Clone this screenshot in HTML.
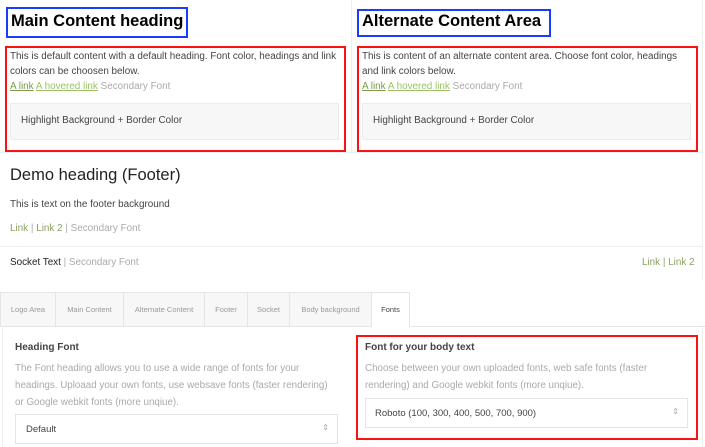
<!DOCTYPE html>
<html><head><style>
*{margin:0;padding:0;box-sizing:border-box}
body{width:705px;height:447px;background:#fff;font-family:"Liberation Sans",sans-serif;position:relative;overflow:hidden;color:#333}
.a{position:absolute;white-space:nowrap}
.blue{position:absolute;border:2px solid #1a3cff}
.red{position:absolute;border:2px solid #ff1010}
.h1{font-weight:bold;font-size:16.5px;color:#000}
.t{font-size:9.9px;color:#444}
.lk{color:#7a9a4a;text-decoration:underline}
.hl{color:#9ac265;text-decoration:underline}
.sec{color:#aaa}
.hb{position:absolute;background:#f7f7f7;border:1px solid #ececec}
.tab{position:absolute;top:292px;height:35px;background:#f7f7f7;border:1px solid #e5e5e5;border-left:none;font-size:7.5px;color:#999;text-align:center;line-height:33px;white-space:nowrap}
.d{font-size:9.8px;color:#aaa;line-height:17px}
</style></head><body>
<div class="a" style="left:351px;top:0;width:1px;height:152px;background:#eee"></div>
<div class="a" style="left:702px;top:0;width:1px;height:280px;background:#eee"></div>
<div class="a" style="left:0;top:152px;width:703px;height:1px;background:#eee"></div>

<div class="blue" style="left:6px;top:7px;width:182px;height:31px"></div>
<div class="a h1" style="left:11px;top:12px">Main Content heading</div>
<div class="red" style="left:5px;top:46px;width:341px;height:106px"></div>
<div class="a t" style="left:10px;top:49px;line-height:15px">This is default content with a default heading. Font color, headings and link<br>colors can be choosen below.<br><span class="lk">A link</span> <span class="hl">A hovered link</span> <span class="sec">Secondary Font</span></div>
<div class="hb" style="left:10px;top:103px;width:329px;height:37px"></div>
<div class="a t" style="left:21px;top:115px">Highlight Background + Border Color</div>

<div class="blue" style="left:357px;top:9px;width:194px;height:28px"></div>
<div class="a h1" style="left:362px;top:12px">Alternate Content Area</div>
<div class="red" style="left:357px;top:46px;width:341px;height:106px"></div>
<div class="a t" style="left:362px;top:49px;line-height:15px">This is content of an alternate content area. Choose font color, headings<br>and link colors below.<br><span class="lk">A link</span> <span class="hl">A hovered link</span> <span class="sec">Secondary Font</span></div>
<div class="hb" style="left:362px;top:103px;width:329px;height:37px"></div>
<div class="a t" style="left:373px;top:115px">Highlight Background + Border Color</div>

<div class="a" style="left:10px;top:166px;font-size:16.5px;color:#222">Demo heading (Footer)</div>
<div class="a t" style="left:10px;top:199px">This is text on the footer background</div>
<div class="a t" style="left:10px;top:223px"><span style="color:#8aa060">Link</span> <span class="sec">|</span> <span style="color:#8aa060">Link 2</span> <span class="sec">| Secondary Font</span></div>
<div class="a" style="left:0;top:246px;width:703px;height:1px;background:#eee"></div>
<div class="a t" style="left:10px;top:257px;color:#222">Socket Text <span class="sec">| Secondary Font</span></div>
<div class="a t" style="left:642px;top:257px;color:#8aa060">Link | Link 2</div>

<div class="a" style="left:0;top:326px;width:705px;height:1px;background:#e5e5e5"></div>
<div class="tab" style="left:0;width:56px;border-left:1px solid #e5e5e5">Logo Area</div>
<div class="tab" style="left:56px;width:68px">Main Content</div>
<div class="tab" style="left:124px;width:81px">Alternate Content</div>
<div class="tab" style="left:205px;width:43px">Footer</div>
<div class="tab" style="left:248px;width:42px">Socket</div>
<div class="tab" style="left:290px;width:82px">Body background</div>
<div class="tab" style="left:372px;width:38px;background:#fff;border-bottom-color:#fff;color:#444;height:36px">Fonts</div>
<div class="a" style="left:2px;top:327px;width:701px;height:120px;border-left:1px solid #eee;border-right:1px solid #eee"></div>

<div class="a" style="left:15px;top:342px;font-size:10px;font-weight:bold;color:#444">Heading Font</div>
<div class="a d" style="left:15px;top:360px">The Font heading allows you to use a wide range of fonts for your<br>headings. Uploaad your own fonts, use websave fonts (faster rendering)<br>or Google webkit fonts (more unqiue).</div>
<div class="a" style="left:15px;top:414px;width:323px;height:30px;border:1px solid #e3e3e3;font-size:9.5px;color:#444;padding:9px 0 0 10px">Default<span style="position:absolute;right:8px;top:8px;color:#aaa;font-size:8px">⇕</span></div>

<div class="red" style="left:356px;top:335px;width:342px;height:105px"></div>
<div class="a" style="left:365px;top:342px;font-size:10px;font-weight:bold;color:#444">Font for your body text</div>
<div class="a d" style="left:365px;top:360px">Choose between your own uploaded fonts, web safe fonts (faster<br>rendering) and Google webkit fonts (more unqiue).</div>
<div class="a" style="left:365px;top:398px;width:323px;height:30px;border:1px solid #e3e3e3;font-size:9.5px;color:#444;padding:9px 0 0 9px">Roboto (100, 300, 400, 500, 700, 900)<span style="position:absolute;right:8px;top:8px;color:#aaa;font-size:8px">⇕</span></div>
</body></html>
